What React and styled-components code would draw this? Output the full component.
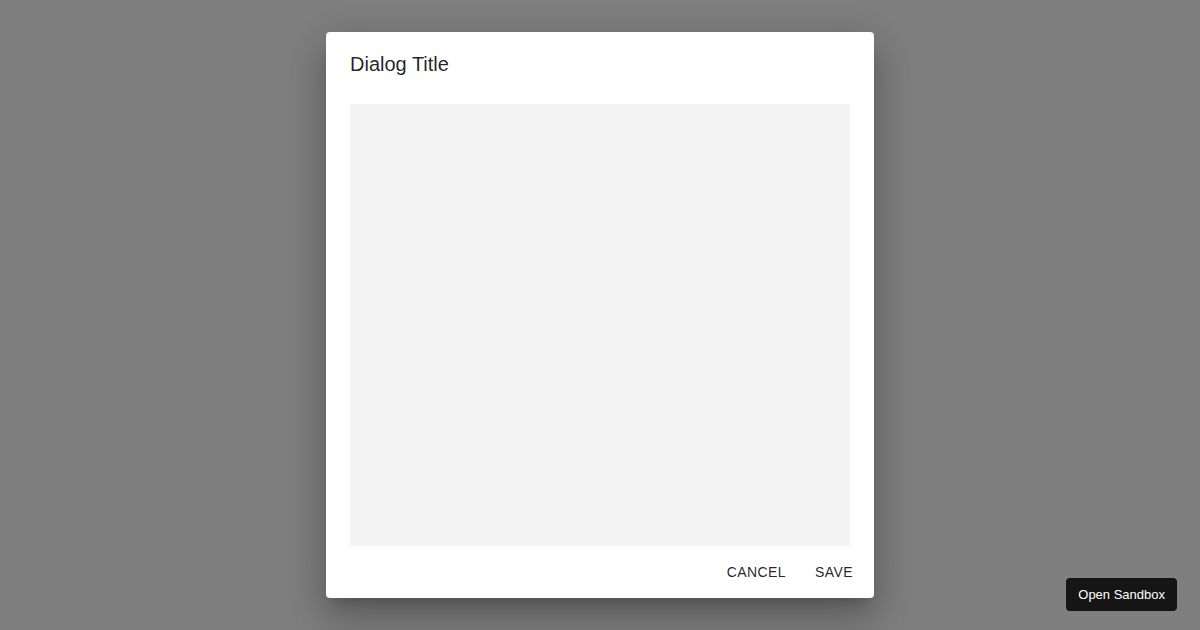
import React from 'react';
import styled, { createGlobalStyle } from 'styled-components';

const GlobalStyle = createGlobalStyle`
  html, body {
    margin: 0;
    padding: 0;
    background: #fff;
    font-family: "Liberation Sans", Arial, sans-serif;
  }
`;

const Backdrop = styled.div`
  min-height: 100vh;
  display: flex;
  align-items: center;
  justify-content: center;
  background-color: rgba(0, 0, 0, 0.5);
`;

const Dialog = styled.div`
  width: 548px;
  background: #fff;
  border-radius: 4px;
  display: flex;
  flex-direction: column;
  box-shadow: 0px 11px 15px -7px rgba(0, 0, 0, 0.2),
    0px 24px 38px 3px rgba(0, 0, 0, 0.14),
    0px 9px 46px 8px rgba(0, 0, 0, 0.12);
`;

const Title = styled.h2`
  margin: 0;
  padding: 16px 24px 0;
  font-size: 20px;
  font-weight: 400;
  line-height: 32px;
  color: rgba(0, 0, 0, 0.87);
`;

const Content = styled.div`
  padding: 24px 24px 0;
`;

const Placeholder = styled.div`
  height: 442px;
  background: #f4f4f4;
`;

const Actions = styled.div`
  display: flex;
  justify-content: flex-end;
  gap: 8px;
  padding: 8px;
`;

const TextButton = styled.button`
  min-width: 64px;
  padding: 6px 8px;
  border: none;
  border-radius: 4px;
  background: transparent;
  font-family: inherit;
  font-size: 14px;
  line-height: 24.5px;
  letter-spacing: 0.4px;
  text-transform: uppercase;
  color: rgba(0, 0, 0, 0.87);
  cursor: pointer;
`;

const SandboxButton = styled.button`
  position: fixed;
  right: 23px;
  bottom: 19px;
  height: 33px;
  padding: 0 12px;
  border: none;
  border-radius: 4px;
  background: #151515;
  color: #fff;
  font-family: inherit;
  font-size: 13px;
  cursor: pointer;
`;

export default function App() {
  return (
    <>
      <GlobalStyle />
      <Backdrop>
        <Dialog>
          <Title>Dialog Title</Title>
          <Content>
            <Placeholder />
          </Content>
          <Actions>
            <TextButton>Cancel</TextButton>
            <TextButton>Save</TextButton>
          </Actions>
        </Dialog>
      </Backdrop>
      <SandboxButton>Open Sandbox</SandboxButton>
    </>
  );
}
